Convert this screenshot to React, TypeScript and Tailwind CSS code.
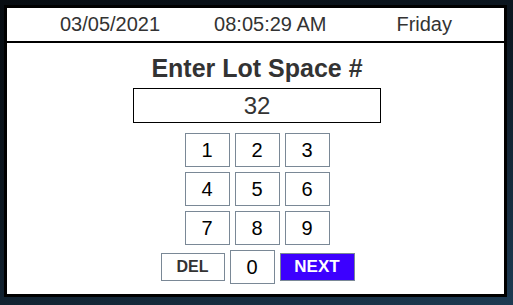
const KEYS = ["1", "2", "3", "4", "5", "6", "7", "8", "9"];

const keyCls =
  "flex h-[34px] w-[45px] items-center justify-center border border-[#7a8896] bg-white text-[20px] text-black";

export default function App() {
  return (
    <div
      className="h-[305px] w-[513px] bg-[linear-gradient(160deg,#070c11_0%,#0d1822_45%,#1d3a52_100%)] pb-[8px] pl-[4px] pr-[6px] pt-[5px]"
      style={{ fontFamily: '"Liberation Sans", Arial, sans-serif' }}
    >
      <div className="flex h-full w-full flex-col border-[3px] border-black bg-white">
        <header className="flex h-[35px] items-center border-b-2 border-black pb-[2px] text-[20px] text-[#333]">
          <span className="ml-[53px]">03/05/2021</span>
          <span className="ml-[54px]">08:05:29 AM</span>
          <span className="ml-[70px]">Friday</span>
        </header>

        <main className="flex flex-col items-center pl-[3px]">
          <h1 className="mt-[12px] text-[25px] leading-[26px] font-bold text-[#333]">
            Enter Lot Space #
          </h1>
          <div className="mt-[7px] flex h-[35px] w-[248px] items-center justify-center border border-black text-[24px] text-[#333]">
            32
          </div>

          <div className="mt-[10px] grid grid-cols-[45px_45px_45px] gap-[5px]">
            {KEYS.map((k) => (
              <button key={k} className={keyCls}>
                {k}
              </button>
            ))}
          </div>

          <div className="mt-[5px] flex items-center gap-[5px] pl-[1px]">
            <button className="flex h-[28px] w-[64px] items-center justify-center border border-[#7a8896] bg-white text-[16px] font-bold text-[#333]">
              DEL
            </button>
            <button className={keyCls}>0</button>
            <button className="flex h-[28px] w-[75px] items-center justify-center border border-[#7a8896] bg-[#3c00ff] text-[17px] font-bold text-white">
              NEXT
            </button>
          </div>
        </main>
      </div>
    </div>
  );
}
